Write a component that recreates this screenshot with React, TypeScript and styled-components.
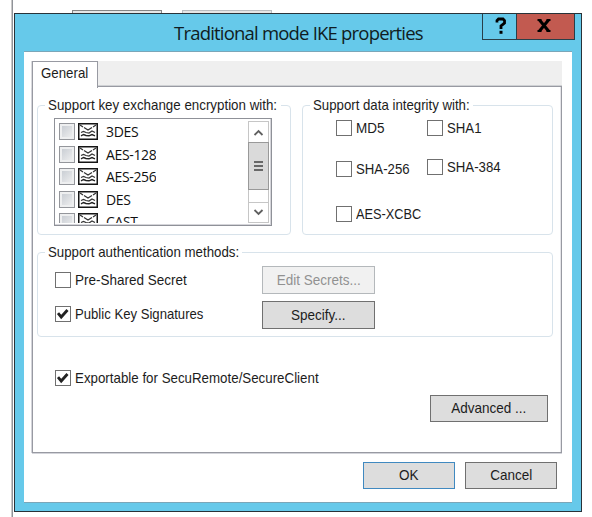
import * as React from 'react'

import styled, { createGlobalStyle } from 'styled-components'

interface OptionProps {
    label: string
    scale?: number
    checked?: boolean
}

const ciphers = ['3DES', 'AES-128', 'AES-256', 'DES', 'CAST']

const Option = ({ label, scale, checked }: OptionProps) => (
    <OptionRow>
        <Box>
            {checked && (
                <svg width="14" height="14" viewBox="0 0 14 14">
                    <path d="M2 6.2 L5.2 10 L11.5 3" fill="none" stroke="#222" strokeWidth="2.8" />
                </svg>
            )}
        </Box>
        <Text $scale={scale}>{label}</Text>
    </OptionRow>
)

const CipherIcon = () => (
    <svg width="20" height="17" viewBox="0 0 20 17">
        <rect x="0.75" y="0.75" width="18.5" height="15.5" fill="#fff" stroke="#151515" strokeWidth="1.5" />
        <path d="M2 2 L5 4 M18 2 L15 4 M6 4.5 L10 7 L14 4.5" fill="none" stroke="#333" strokeWidth="1.3" />
        <path d="M3 9.5 L5.5 8.5 L8 9.5 L11 10 L14 8 L17 9.5" fill="none" stroke="#333" strokeWidth="1.2" />
        <path d="M3 12.8 L5.5 11.5 L8 12.5 L11 12.8 L14 11.5 L17 12.8" fill="none" stroke="#222" strokeWidth="1.4" />
    </svg>
)

const Chevron = ({ down }: { down?: boolean }) => (
    <svg width="11" height="7" viewBox="0 0 11 7">
        <path d={down ? 'M1.5 1 L5.5 5 L9.5 1' : 'M1.5 6 L5.5 2 L9.5 6'} fill="none" stroke="#606060" strokeWidth="1.8" />
    </svg>
)

export default () => (
    <Page>
        <GlobalStyle />
        <Background>
            <GhostButton $dark />
            <GhostButton />
        </Background>
        <Dialog>
            <TitleBar>
                <Title>Traditional mode IKE properties</Title>
                <CaptionButton $width={35}>
                    <svg width="12" height="17" viewBox="0 0 12 17">
                        <path d="M2 5.5 V3.5 L3.5 2 H8 L9.5 3.5 V6 L6 9 V12" fill="none" stroke="#000" strokeWidth="2.8" />
                        <rect x="4.5" y="13.8" width="3" height="3" />
                    </svg>
                </CaptionButton>
                <CaptionButton $width={58} $close>
                    <svg width="14" height="13" viewBox="0 0 14 13">
                        <path d="M2.5 1 L11.5 12 M11.5 1 L2.5 12" stroke="#000" strokeWidth="3" />
                        <path d="M0.5 1 H4.5 M9.5 1 H13.5 M0.5 12 H4.5 M9.5 12 H13.5" stroke="#000" strokeWidth="1.8" />
                    </svg>
                </CaptionButton>
            </TitleBar>
            <Client>
                <TabStrip>
                    <Tab><Text $scale={0.885}>General</Text></Tab>
                </TabStrip>
                <Pane>
                    <GroupRow>
                        <Group $width={254} $height={139}>
                            <Legend $width={236}><Text $scale={0.889}>Support key exchange encryption with:</Text></Legend>
                            <ListBox>
                                <List>
                                    {ciphers.map(name => (
                                        <ListItem key={name}>
                                            <ListCheck />
                                            <CipherIcon />
                                            <ListText>{name}</ListText>
                                        </ListItem>
                                    ))}
                                </List>
                                <ScrollBar>
                                    <ScrollButton><Chevron /></ScrollButton>
                                    <Thumb><Grip /><Grip /><Grip /></Thumb>
                                    <ScrollButton><Chevron down /></ScrollButton>
                                </ScrollBar>
                            </ListBox>
                        </Group>
                        <Group $width={251} $height={139}>
                            <Legend $width={163}><Text $scale={0.882}>Support data integrity with:</Text></Legend>
                            <IntegrityGrid>
                                <IntegrityColumn $gaps={[24, 28]}>
                                    <Option label="MD5" />
                                    <Option label="SHA-256" scale={0.88} />
                                    <Option label="AES-XCBC" scale={0.85} />
                                </IntegrityColumn>
                                <IntegrityColumn $gaps={[22, 0]}>
                                    <Option label="SHA1" scale={0.88} />
                                    <Option label="SHA-384" scale={0.88} />
                                </IntegrityColumn>
                            </IntegrityGrid>
                        </Group>
                    </GroupRow>
                    <Group $width={516} $height={94}>
                        <Legend $width={197}><Text $scale={0.885}>Support authentication methods:</Text></Legend>
                        <MethodGrid>
                            <Option label="Pre-Shared Secret" />
                            <Button $width={113} $height={28} disabled><Text $center>Edit Secrets...</Text></Button>
                            <Raised><Option label="Public Key Signatures" scale={0.875} checked /></Raised>
                            <Button $width={113} $height={28}><Text $center>Specify...</Text></Button>
                        </MethodGrid>
                    </Group>
                    <ExportRow>
                        <Option label="Exportable for SecuRemote/SecureClient" scale={0.888} checked />
                    </ExportRow>
                    <AdvancedRow>
                        <Button $width={118} $height={27}><Text $center>Advanced ...</Text></Button>
                    </AdvancedRow>
                </Pane>
                <Footer>
                    <Button $width={92} $height={27} $primary><Text $center>OK</Text></Button>
                    <Button $width={92} $height={27}><Text $center>Cancel</Text></Button>
                </Footer>
            </Client>
        </Dialog>
    </Page>
)

const GlobalStyle = createGlobalStyle`
    * {
        box-sizing: border-box;
    }

    body {
        margin: 0;
        background: #fff;
        color: #1c1c1c;
        font: 15px/18px "Liberation Sans", Arial, sans-serif;
    }

    svg {
        display: block;
        flex: none;
    }
`

const Page = styled.main`
    width: 581px;
    height: 517px;
    margin-left: 11px;
    border-left: 1px solid #c9c9c9;
    box-shadow: inset 1px 0 #909399;
    overflow: hidden;
`

const Background = styled.div`
    display: flex;
    gap: 20px;
    height: 13px;
    padding: 10px 0 0 60px;
`

const GhostButton = styled.div<{ $dark?: boolean }>`
    width: 90px;
    height: 3px;
    border: 1px solid ${p => p.$dark ? '#858585' : '#b9bdc1'};
    border-bottom: 0;
    background: #e6e6e6;
`

const Dialog = styled.section`
    width: 568px;
    height: 499px;
    margin-left: 2px;
    border: 1px solid #283238;
    background: #66c9ea;
`

const TitleBar = styled.header`
    display: flex;
    align-items: flex-start;
    height: 37px;
`

const Title = styled.h1`
    flex: none;
    width: 467px;
    margin: 0;
    padding: 6px 0 0 159px;
    color: #101c22;
    font: 400 18.5px/26px "Open Sans", "Noto Sans", sans-serif;
    letter-spacing: -0.8px;
    white-space: nowrap;
`

const CaptionButton = styled.div<{ $width: number; $close?: boolean }>`
    display: flex;
    align-items: center;
    justify-content: center;
    width: ${p => p.$width}px;
    height: 26px;
    padding-bottom: 2px;
    padding-left: ${p => p.$close ? 0 : 3}px;
    padding-right: ${p => p.$close ? 3 : 0}px;
    border: 1px solid #283f49;
    border-top: 0;
    border-left-width: ${p => p.$close ? 0 : 1}px;
    background: ${p => p.$close ? '#c25a50' : '#66c9ea'};
`

const Client = styled.div`
    width: 548px;
    height: 452px;
    margin-left: 9px;
    padding: 9px 10px 0 8px;
    border-top: 1px solid #7ba6b8;
    border-bottom: 1px solid #7ba6b8;
    background: #fff;
`

const TabStrip = styled.div`
    height: 25px;
    background: #efefef;
`

const Tab = styled.div`
    position: relative;
    width: 66px;
    height: 27px;
    padding: 2px 0 0 8px;
    border: 1px solid #989aa2;
    border-bottom: 0;
    background: #fff;
    box-shadow: -1px 0 #d9dade;
`

const Pane = styled.div`
    height: 367px;
    padding: 9px 8px 0 4px;
    border: 1px solid #989aa2;
    box-shadow: -1px 0 #d3d4da, 0 1px #d3d4da, inset -1px 0 #e4e4e8, 0 -1px #cfd1d4;
`

const GroupRow = styled.div`
    display: flex;
    gap: 11px;
    margin-bottom: 8px;
`

const Group = styled.fieldset<{ $width: number; $height: number }>`
    width: ${p => p.$width}px;
    height: ${p => p.$height}px;
    min-width: 0;
    margin: 0;
    padding: 0;
    border: 1px solid #d8e3eb;
    border-radius: 4px;
`

const Legend = styled.legend<{ $width: number }>`
    width: ${p => p.$width}px;
    height: 18px;
    margin-left: 7px;
    padding: 0 0 0 3px;
`

const Text = styled.span<{ $scale?: number; $center?: boolean }>`
    display: inline-block;
    white-space: nowrap;
    transform: scaleX(${p => p.$scale || 0.9});
    transform-origin: ${p => p.$center ? 'center' : 'left'};
`

const ListBox = styled.div`
    display: flex;
    justify-content: space-between;
    width: 218px;
    height: 108px;
    margin: 4px 0 0 16px;
    padding: 2px;
    border: 1px solid #8f9198;
    box-shadow: inset -1px -1px #d5d5da;
`

const List = styled.div`
    height: 102px;
    padding: 2px 0 0 2px;
    overflow: hidden;
`

const ListItem = styled.div`
    display: flex;
    height: 22.5px;
`

const ListCheck = styled.div`
    width: 16px;
    height: 17px;
    margin-right: 3px;
    border: 1px solid #94969b;
    background: linear-gradient(135deg, #c3c8cf, #f3f3f3);
    box-shadow: inset 0 0 0 2px #eeeff0;
`

const ListText = styled.span`
    padding-left: 8px;
    color: #111;
    font: 14px/17px "Open Sans", "Noto Sans", sans-serif;
    letter-spacing: -0.35px;
`

const ScrollBar = styled.div`
    width: 21px;
    height: 102px;
    border: 1px solid #c6c6c6;
    display: flex;
    flex-direction: column;
`

const ScrollButton = styled.div`
    display: flex;
    align-items: center;
    justify-content: center;
    height: 20px;

    &:last-child {
        margin-top: auto;
        border-top: 1px solid #c6c6c6;
    }
`

const Thumb = styled.div`
    display: flex;
    flex-direction: column;
    align-items: center;
    justify-content: center;
    gap: 2px;
    height: 48px;
    margin: 0 -1px;
    border: 1px solid #999;
    background: #dadada;
`

const Grip = styled.i`
    width: 9px;
    height: 2px;
    background: #686868;
`

const OptionRow = styled.label`
    display: flex;
    align-items: center;
    gap: 4px;
    height: 17px;
`

const Box = styled.span`
    display: flex;
    flex: none;
    width: 16px;
    height: 16px;
    border: 1px solid #707070;
    background: #fff;
`

const IntegrityGrid = styled.div`
    display: grid;
    grid-template-columns: 91px 1fr;
    padding: 5px 0 0 33px;
`

const IntegrityColumn = styled.div<{ $gaps: number[] }>`
    ${OptionRow}:nth-child(1) {
        margin-bottom: ${p => p.$gaps[0]}px;
    }

    ${OptionRow}:nth-child(2) {
        margin-bottom: ${p => p.$gaps[1]}px;
    }
`

const MethodGrid = styled.div`
    display: grid;
    grid-template-columns: 207px 113px;
    row-gap: 7px;
    align-items: center;
    padding: 5px 0 0 17px;
`

const Raised = styled.div`
    padding-bottom: 3px;
`

const Button = styled.button<{ $width: number; $height: number; $primary?: boolean }>`
    display: flex;
    align-items: center;
    justify-content: center;
    width: ${p => p.$width}px;
    height: ${p => p.$height}px;
    padding: 0 0 1px;
    border: 1px solid ${p => p.$primary ? '#4089c0' : '#707070'};
    background: #dddddd;
    color: #1c1c1c;
    font: inherit;

    &:disabled {
        border-color: #b4b8bb;
        background: #f1f1f1;
        color: #919191;
    }
`

const ExportRow = styled.div`
    padding: 32px 0 0 18px;
`

const AdvancedRow = styled.div`
    display: flex;
    justify-content: flex-end;
    padding: 9px 5px 0 0;
`

const Footer = styled.footer`
    display: flex;
    justify-content: flex-end;
    gap: 10px;
    padding: 9px 5px 0 0;
`
